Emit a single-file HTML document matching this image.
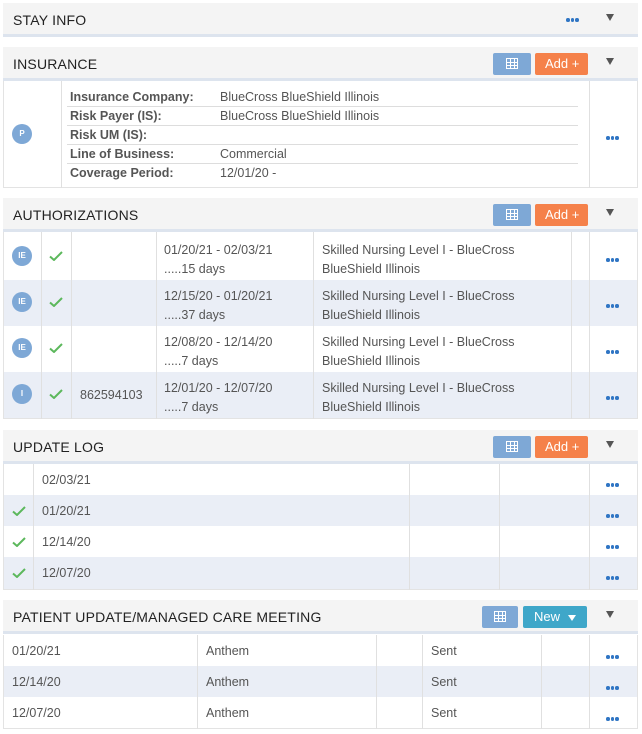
<!DOCTYPE html>
<html><head><meta charset="utf-8"><style>
*{box-sizing:border-box;margin:0;padding:0}
body{width:642px;height:734px;background:#fff;font-family:"Liberation Sans",sans-serif;font-size:12.5px;color:#555;position:relative;overflow:hidden}
.a{position:absolute}
.hd{position:absolute;left:3px;width:635px;height:34px;background:#f4f4f4;border-bottom:3px solid #dde4ee}
.hd .t{position:absolute;left:10px;top:9px;font-size:14px;color:#222;letter-spacing:.2px}
.caret{position:absolute;left:603px;top:11px;width:0;height:0;border-left:4px solid transparent;border-right:4px solid transparent;border-top:7px solid #555}
.dots{position:absolute;width:14px;height:4px}
.dots i{float:left;width:3.6px;height:3.6px;border-radius:50%;background:#2f75c4;margin-right:1px}
.gb{position:absolute;top:6px;height:22px;background:#7ea8d6;border-radius:2px}
.gb span{position:absolute;left:50%;top:5px;margin-left:-6px;width:12px;height:11px;border:1px solid #fff;background:
linear-gradient(#fff,#fff) 3px 0/1px 100% no-repeat,linear-gradient(#fff,#fff) 7px 0/1px 100% no-repeat,linear-gradient(#fff,#fff) 0 2.5px/100% 1px no-repeat,linear-gradient(#fff,#fff) 0 5.5px/100% 1px no-repeat}
.add{position:absolute;left:532px;top:6px;width:53px;height:22px;background:#f5814a;border-radius:2px;color:#fff;font-size:13px;line-height:22px;padding-left:10px}
.box{position:absolute;left:3px;width:635px;border:1px solid #e3e3e3;border-top:none}
.vl{position:absolute;width:1px;background:#e0e0e0}
.alt{position:absolute;left:4px;width:633px;background:#eaeef6}
.badge{position:absolute;width:20px;height:20px;border-radius:50%;background:#7ea8d6;color:#fff;font-size:8px;font-weight:bold;text-align:center;line-height:20px}
.ck{position:absolute;width:14px;height:10px}
.lbl{position:absolute;left:70px;font-weight:bold;color:#555}
.val{position:absolute;left:220px}
.hr{position:absolute;left:67px;width:511px;height:1px;background:#ddd}
</style></head><body>
<svg width="0" height="0" style="position:absolute"><defs><symbol id="c" viewBox="0 0 14 10"><path d="M1 5.5 L5 9 L13 1" fill="none" stroke="#5cb85c" stroke-width="2"/></symbol></defs></svg>

<!-- STAY INFO -->
<div class="hd" style="top:3px"><div class="t">STAY INFO</div><div class="dots" style="left:563px;top:15px"><i></i><i></i><i></i></div><div class="caret"></div></div>

<!-- INSURANCE -->
<div class="hd" style="top:47px"><div class="t">INSURANCE</div><div class="gb" style="left:490px;width:38px"><span></span></div><div class="add">Add +</div><div class="caret"></div></div>
<div class="box" style="top:81px;height:107px"></div>
<div class="vl" style="left:61px;top:81px;height:107px"></div>
<div class="vl" style="left:589px;top:81px;height:107px"></div>
<div class="badge" style="left:12px;top:124px">P</div>
<div class="lbl" style="top:90px">Insurance Company:</div><div class="val" style="top:90px">BlueCross BlueShield Illinois</div>
<div class="hr" style="top:106px"></div>
<div class="lbl" style="top:109px">Risk Payer (IS):</div><div class="val" style="top:109px">BlueCross BlueShield Illinois</div>
<div class="hr" style="top:125px"></div>
<div class="lbl" style="top:128px">Risk UM (IS):</div>
<div class="hr" style="top:144px"></div>
<div class="lbl" style="top:147px">Line of Business:</div><div class="val" style="top:147px">Commercial</div>
<div class="hr" style="top:163px"></div>
<div class="lbl" style="top:166px">Coverage Period:</div><div class="val" style="top:166px">12/01/20 -</div>
<div class="dots" style="left:606px;top:136px"><i></i><i></i><i></i></div>

<!-- AUTHORIZATIONS -->
<div class="hd" style="top:198px"><div class="t">AUTHORIZATIONS</div><div class="gb" style="left:490px;width:38px"><span></span></div><div class="add">Add +</div><div class="caret"></div></div>
<div class="box" style="top:232px;height:187px"></div>
<div class="alt" style="top:280px;height:46px"></div>
<div class="alt" style="top:372px;height:46px"></div>
<div class="vl" style="left:41px;top:232px;height:187px"></div>
<div class="vl" style="left:71px;top:232px;height:187px"></div>
<div class="vl" style="left:156px;top:232px;height:187px"></div>
<div class="vl" style="left:313px;top:232px;height:187px"></div>
<div class="vl" style="left:571px;top:232px;height:187px"></div>
<div class="vl" style="left:589px;top:232px;height:187px"></div>

<div class="badge" style="left:12px;top:246px">IE</div><svg class="ck" style="left:49px;top:251px"><use href="#c"/></svg>
<div class="a" style="left:164px;top:241px;line-height:19px">01/20/21 - 02/03/21<br>.....15 days</div>
<div class="a" style="left:322px;top:241px;line-height:19px">Skilled Nursing Level I - BlueCross<br>BlueShield Illinois</div>
<div class="dots" style="left:606px;top:258px"><i></i><i></i><i></i></div>

<div class="badge" style="left:12px;top:292px">IE</div><svg class="ck" style="left:49px;top:297px"><use href="#c"/></svg>
<div class="a" style="left:164px;top:287px;line-height:19px">12/15/20 - 01/20/21<br>.....37 days</div>
<div class="a" style="left:322px;top:287px;line-height:19px">Skilled Nursing Level I - BlueCross<br>BlueShield Illinois</div>
<div class="dots" style="left:606px;top:304px"><i></i><i></i><i></i></div>

<div class="badge" style="left:12px;top:338px">IE</div><svg class="ck" style="left:49px;top:343px"><use href="#c"/></svg>
<div class="a" style="left:164px;top:333px;line-height:19px">12/08/20 - 12/14/20<br>.....7 days</div>
<div class="a" style="left:322px;top:333px;line-height:19px">Skilled Nursing Level I - BlueCross<br>BlueShield Illinois</div>
<div class="dots" style="left:606px;top:350px"><i></i><i></i><i></i></div>

<div class="badge" style="left:12px;top:384px">I</div><svg class="ck" style="left:49px;top:389px"><use href="#c"/></svg>
<div class="a" style="left:80px;top:388px">862594103</div>
<div class="a" style="left:164px;top:379px;line-height:19px">12/01/20 - 12/07/20<br>.....7 days</div>
<div class="a" style="left:322px;top:379px;line-height:19px">Skilled Nursing Level I - BlueCross<br>BlueShield Illinois</div>
<div class="dots" style="left:606px;top:396px"><i></i><i></i><i></i></div>

<!-- UPDATE LOG -->
<div class="hd" style="top:430px"><div class="t">UPDATE LOG</div><div class="gb" style="left:490px;width:38px"><span></span></div><div class="add">Add +</div><div class="caret"></div></div>
<div class="box" style="top:464px;height:126px"></div>
<div class="alt" style="top:495px;height:31px"></div>
<div class="alt" style="top:557px;height:32px"></div>
<div class="vl" style="left:33px;top:464px;height:126px"></div>
<div class="vl" style="left:409px;top:464px;height:126px"></div>
<div class="vl" style="left:499px;top:464px;height:126px"></div>
<div class="vl" style="left:589px;top:464px;height:126px"></div>
<div class="a" style="left:42px;top:473px">02/03/21</div><div class="dots" style="left:606px;top:483px"><i></i><i></i><i></i></div>
<svg class="ck" style="left:12px;top:506px"><use href="#c"/></svg><div class="a" style="left:42px;top:504px">01/20/21</div><div class="dots" style="left:606px;top:514px"><i></i><i></i><i></i></div>
<svg class="ck" style="left:12px;top:537px"><use href="#c"/></svg><div class="a" style="left:42px;top:535px">12/14/20</div><div class="dots" style="left:606px;top:545px"><i></i><i></i><i></i></div>
<svg class="ck" style="left:12px;top:568px"><use href="#c"/></svg><div class="a" style="left:42px;top:566px">12/07/20</div><div class="dots" style="left:606px;top:576px"><i></i><i></i><i></i></div>

<!-- PATIENT UPDATE -->
<div class="hd" style="top:600px"><div class="t">PATIENT UPDATE/MANAGED CARE MEETING</div><div class="gb" style="left:479px;width:36px"><span></span></div>
<div class="a" style="left:520px;top:6px;width:64px;height:22px;background:#3fa7c9;border-radius:2px;color:#fff;font-size:13px;line-height:22px;padding-left:11px">New <span style="display:inline-block;width:0;height:0;border-left:4px solid transparent;border-right:4px solid transparent;border-top:6px solid #fff;margin-left:4px;vertical-align:middle"></span></div>
<div class="caret"></div></div>
<div class="box" style="top:635px;height:94px"></div>
<div class="alt" style="top:666px;height:31px"></div>
<div class="vl" style="left:197px;top:635px;height:94px"></div>
<div class="vl" style="left:376px;top:635px;height:94px"></div>
<div class="vl" style="left:422px;top:635px;height:94px"></div>
<div class="vl" style="left:541px;top:635px;height:94px"></div>
<div class="vl" style="left:589px;top:635px;height:94px"></div>
<div class="a" style="left:12px;top:644px">01/20/21</div><div class="a" style="left:206px;top:644px">Anthem</div><div class="a" style="left:431px;top:644px">Sent</div><div class="dots" style="left:606px;top:655px"><i></i><i></i><i></i></div>
<div class="a" style="left:12px;top:675px">12/14/20</div><div class="a" style="left:206px;top:675px">Anthem</div><div class="a" style="left:431px;top:675px">Sent</div><div class="dots" style="left:606px;top:686px"><i></i><i></i><i></i></div>
<div class="a" style="left:12px;top:706px">12/07/20</div><div class="a" style="left:206px;top:706px">Anthem</div><div class="a" style="left:431px;top:706px">Sent</div><div class="dots" style="left:606px;top:717px"><i></i><i></i><i></i></div>
</body></html>
